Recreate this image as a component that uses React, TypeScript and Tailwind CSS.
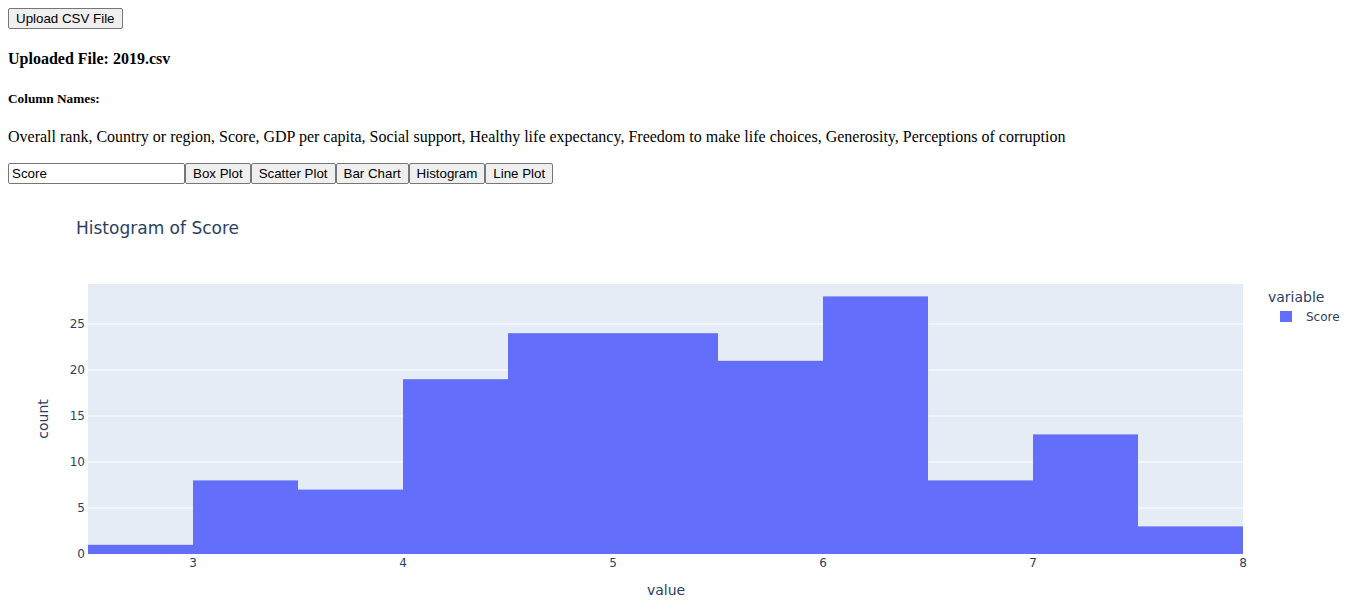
import React from "react";

const bins = [1, 8, 7, 19, 24, 24, 21, 28, 8, 13, 3];
const X0 = 80;
const Y1 = 370;
const xs = (v: number) => X0 + (v - 2.5) * 210;
const ys = (c: number) => Y1 - c * 9.2;
const plotFont = "'DejaVu Sans', Verdana, sans-serif";

function Chart() {
  return (
    <svg width={1348} height={450} className="block" style={{ fontFamily: plotFont }}>
      <rect x={0} y={0} width={1348} height={450} fill="#ffffff" />
      <rect x={80} y={100} width={1155} height={270} fill="#e5ecf6" />
      {[5, 10, 15, 20, 25].map((t) => (
        <line key={t} x1={80} x2={1235} y1={ys(t)} y2={ys(t)} stroke="#ffffff" strokeWidth={1} />
      ))}
      {bins.map((c, i) => {
        const x = xs(2.5 + i * 0.5);
        return <rect key={i} x={x} y={ys(c)} width={105} height={c * 9.2} fill="#636efa" />;
      })}
      {[0, 5, 10, 15, 20, 25].map((t) => (
        <text key={t} x={77} y={ys(t) + 4} textAnchor="end" fontSize={12} fill="#2a3f5f">
          {t}
        </text>
      ))}
      {[3, 4, 5, 6, 7, 8].map((t) => (
        <text key={t} x={xs(t)} y={383} textAnchor="middle" fontSize={12} fill="#2a3f5f">
          {t}
        </text>
      ))}
      <text x={68} y={50} fontSize={17} fill="#2a3f5f">
        Histogram of Score
      </text>
      <text x={658} y={411} textAnchor="middle" fontSize={14} fill="#2a3f5f">
        value
      </text>
      <text x={40} y={235} textAnchor="middle" fontSize={14} fill="#2a3f5f" transform="rotate(-90 40 235)">
        count
      </text>
      <text x={1260} y={118} fontSize={14} fill="#2a3f5f">
        variable
      </text>
      <rect x={1272} y={127} width={12} height={11} fill="#636efa" />
      <text x={1298} y={137} fontSize={12} fill="#2a3f5f">
        Score
      </text>
    </svg>
  );
}

const btn =
  "h-[21px] px-[7px] bg-[#efefef] border border-[#767676] rounded-[2px] text-[13.33px] leading-none text-black";

export default function App() {
  return (
    <div className="bg-white text-black min-h-[616px] leading-normal" style={{ fontFamily: "'Liberation Serif', 'Times New Roman', serif" }}>
      <div className="pt-2 px-2">
        <div className="flex h-[21px]" style={{ fontFamily: "'Liberation Sans', Arial, sans-serif" }}>
          <button className={btn}>Upload CSV File</button>
        </div>
        <h4 className="text-[16px] font-bold mt-[21.28px] leading-[18.4px]">Uploaded File: 2019.csv</h4>
        <h5 className="text-[13.28px] font-bold mt-[22.18px] leading-[15.3px]">Column Names:</h5>
        <p className="text-[16px] mt-[22.18px] leading-[18.4px]">
          Overall rank, Country or region, Score, GDP per capita, Social support, Healthy life expectancy, Freedom to make life choices, Generosity, Perceptions of corruption
        </p>
        <div className="mt-[16px] flex h-[21px]" style={{ fontFamily: "'Liberation Sans', Arial, sans-serif" }}>
          <input
            defaultValue="Score"
            className="w-[177px] h-[21px] border border-[#767676] rounded-[2px] px-[3px] text-[13.33px] text-black bg-white outline-none"
          />
          <button className={btn}>Box Plot</button>
          <button className={btn}>Scatter Plot</button>
          <button className={btn}>Bar Chart</button>
          <button className={btn}>Histogram</button>
          <button className={btn}>Line Plot</button>
        </div>
        <Chart />
      </div>
    </div>
  );
}
